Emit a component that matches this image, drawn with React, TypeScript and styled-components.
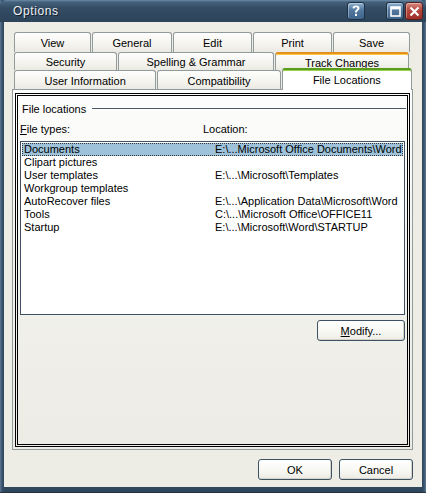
import styled, { createGlobalStyle } from 'styled-components';

const GlobalStyle = createGlobalStyle`
	html, body {
		margin: 0;
		padding: 0;
		background: #ffffff;
	}
	* {
		box-sizing: border-box;
	}
`;

const tabRows = [
	{
		height: 20,
		tabs: [
			{ label: 'View', width: 77 },
			{ label: 'General', width: 80 },
			{ label: 'Edit', width: 79 },
			{ label: 'Print', width: 79 },
			{ label: 'Save', width: 77 },
		],
	},
	{
		height: 18,
		tabs: [
			{ label: 'Security', width: 103 },
			{ label: 'Spelling & Grammar', width: 156 },
			{ label: 'Track Changes', width: 134, hot: true },
		],
	},
	{
		height: 19,
		tabs: [
			{ label: 'User Information', width: 143 },
			{ label: 'Compatibility', width: 124 },
			{ label: 'File Locations', width: 131, selected: true },
		],
	},
];

const locations = [
	{ name: 'Documents', path: 'E:\\...Microsoft Office Documents\\Word' },
	{ name: 'Clipart pictures', path: '' },
	{ name: 'User templates', path: 'E:\\...\\Microsoft\\Templates' },
	{ name: 'Workgroup templates', path: '' },
	{ name: 'AutoRecover files', path: 'E:\\...\\Application Data\\Microsoft\\Word' },
	{ name: 'Tools', path: 'C:\\...\\Microsoft Office\\OFFICE11' },
	{ name: 'Startup', path: 'E:\\...\\Microsoft\\Word\\STARTUP' },
];

export default function App() {
	return (
		<>
			<GlobalStyle />
			<Window>
				<TitleBar>
					<Title>Options</Title>
					<CaptionButton $kind='help' style={{ marginRight: 20 }}>
						<svg width='10' height='12' viewBox='0 0 10 12'>
							<path
								d='M1.5 3.2 C1.5 1.2 3 0.5 5 0.5 C7.2 0.5 8.5 1.6 8.5 3.2 C8.5 5 6 5.4 6 7.4 L4 7.4 C4 4.8 6.4 4.6 6.4 3.3 C6.4 2.5 5.8 2.2 5 2.2 C4.1 2.2 3.6 2.7 3.6 3.5 Z'
								fill='#fff'
							/>
							<rect x='4' y='8.8' width='2' height='2.2' fill='#fff' />
						</svg>
					</CaptionButton>
					<CaptionButton $kind='max'>
						<svg width='11' height='11' viewBox='0 0 11 11'>
							<rect x='1' y='1' width='9' height='9' fill='none' stroke='#fff' strokeWidth='1.6' />
							<rect x='1' y='1' width='9' height='2.4' fill='#fff' />
						</svg>
					</CaptionButton>
					<CaptionButton $kind='close'>
						<svg width='11' height='11' viewBox='0 0 11 11'>
							<path d='M1.5 1.5 L9.5 9.5 M9.5 1.5 L1.5 9.5' stroke='#fff' strokeWidth='2.2' />
						</svg>
					</CaptionButton>
				</TitleBar>

				<Body>
					<TabStrip>
						{tabRows.map((row, i) => (
							<TabRow key={i} $height={row.height}>
								{row.tabs.map((tab) => (
									<Tab
										key={tab.label}
										$width={tab.width}
										$hot={!!tab.hot}
										$selected={!!tab.selected}
									>
										{tab.label}
									</Tab>
								))}
							</TabRow>
						))}
					</TabStrip>

					<Panel>
						<Frame>
							<GroupHeader>
								<span>File locations</span>
								<GroupLine />
							</GroupHeader>

							<ColumnHeads>
								<span>
									<u>F</u>ile types:
								</span>
								<span>Location:</span>
							</ColumnHeads>

							<ListBox>
								{locations.map((loc, i) => (
									<ListRow key={loc.name} $selected={i === 0}>
										<span>{loc.name}</span>
										<span>{loc.path}</span>
									</ListRow>
								))}
							</ListBox>

							<ModifyRow>
								<Button $width={88}>
									<u>M</u>odify...
								</Button>
							</ModifyRow>
						</Frame>
					</Panel>

					<Footer>
						<Button $width={74}>OK</Button>
						<Button $width={74}>Cancel</Button>
					</Footer>
				</Body>
			</Window>
		</>
	);
}

const Window = styled.div`
	width: 426px;
	height: 493px;
	display: flex;
	flex-direction: column;
	padding: 0 4px 5px 4px;
	background: linear-gradient(90deg, #5d7a96 0px, #3a536c 2px, #2f465c 4px, #2f465c 422px, #3a536c 424px, #5d7a96 426px);
	border-bottom: 1px solid #22303e;
	font-family: 'Liberation Sans', Arial, sans-serif;
	font-size: 11px;
	color: #000;
`;

const TitleBar = styled.div`
	height: 22px;
	flex: none;
	display: flex;
	align-items: center;
	margin: 0 -4px;
	padding: 0 3px 0 13px;
	background: linear-gradient(180deg, #6b8aa6 0px, #45627d 2px, #344d65 8px, #2c4358 22px);
	border-radius: 6px 6px 0 0;
`;

const Title = styled.div`
	flex: 1;
	color: #eef2f6;
	font-family: 'Liberation Sans', Arial, sans-serif;
	font-size: 12px;
	letter-spacing: 0.6px;
	text-shadow: 1px 1px 0 #14202c;
`;

const CaptionButton = styled.div<{ $kind: 'help' | 'max' | 'close' }>`
	width: 18px;
	height: 18px;
	margin-left: 1px;
	display: flex;
	align-items: center;
	justify-content: center;
	border-radius: 3px;
	border: 1px solid ${(p) => (p.$kind === 'close' ? '#5a2020' : '#1c3046')};
	background: ${(p) =>
		p.$kind === 'close'
			? 'linear-gradient(180deg, #d88a80 0%, #b5473d 45%, #9e3029 100%)'
			: 'linear-gradient(180deg, #8fb0cf 0%, #52789e 45%, #3f6488 100%)'};
	box-shadow: inset 1px 1px 0 rgba(255, 255, 255, 0.35);
`;

const Body = styled.div`
	flex: 1;
	display: flex;
	flex-direction: column;
	padding: 10px 10px 0 8px;
	background: #edece5;
`;

const TabStrip = styled.div`
	display: flex;
	flex-direction: column;
	padding-left: 2px;
`;

const TabRow = styled.div<{ $height: number }>`
	height: ${(p) => p.$height}px;
	display: flex;
	gap: 1px;
	align-items: flex-end;
`;

const Tab = styled.div<{ $width: number; $hot: boolean; $selected: boolean }>`
	width: ${(p) => p.$width}px;
	height: ${(p) => (p.$selected ? 'calc(100% + 3px)' : '100%')};
	display: flex;
	align-items: center;
	justify-content: center;
	padding-top: ${(p) => (p.$selected ? '0' : '1px')};
	border: 1px solid #919b9c;
	border-bottom: none;
	border-radius: 3px 3px 0 0;
	background: ${(p) =>
		p.$selected ? '#ffffff' : 'linear-gradient(180deg, #fefefe 0%, #f4f3ee 60%, #eae9e2 100%)'};
	white-space: nowrap;
	${(p) =>
		p.$hot &&
		`
		border-top: 2px solid #e3901c;
		box-shadow: inset 0 1px 0 #ffc74a;
	`}
	${(p) =>
		p.$selected &&
		`
		position: relative;
		z-index: 1;
		margin-bottom: -1px;
		border-top: 2px solid #5a9c1c;
		box-shadow: inset 0 1px 0 #9ad44e;
	`}
`;

const Panel = styled.div`
	height: 361px;
	flex: none;
	margin-right: -1px;
	padding: 3px 2px 2px 2px;
	border: 1px solid #919b9c;
	background: linear-gradient(180deg, #fdfdfd 0%, #f3f3ee 45%, #ecebe4 100%);
`;

const Frame = styled.div`
	height: 100%;
	display: flex;
	flex-direction: column;
	padding: 6px 0 0 2px;
	border: 3px double #000;
`;

const GroupHeader = styled.div`
	display: flex;
	align-items: center;
	gap: 6px;
	height: 13px;
	padding-left: 2px;
	margin-right: 1px;
`;

const GroupLine = styled.div`
	flex: 1;
	height: 1px;
	background: #4a5866;
`;

const ColumnHeads = styled.div`
	display: grid;
	grid-template-columns: 183px 1fr;
	height: 13px;
	margin-top: 8px;
`;

const ListBox = styled.div`
	height: 174px;
	margin: 5px 2px 0 0;
	padding: 1px;
	background: #ffffff;
	border: 1px solid #3f5265;
`;

const ListRow = styled.div<{ $selected: boolean }>`
	display: grid;
	grid-template-columns: 191px 1fr;
	height: 13px;
	line-height: 12px;
	padding-left: 2px;
	white-space: nowrap;
	overflow: hidden;
	background: ${(p) => (p.$selected ? '#9dc2d9' : 'transparent')};
	outline: ${(p) => (p.$selected ? '1px dotted #333' : 'none')};
	outline-offset: -1px;
`;

const ModifyRow = styled.div`
	display: flex;
	justify-content: flex-end;
	margin: 5px 2px 0 0;
`;

const Button = styled.div<{ $width: number }>`
	width: ${(p) => p.$width}px;
	height: 21px;
	display: flex;
	align-items: center;
	justify-content: center;
	border: 1px solid #3e5163;
	border-radius: 3px;
	background: linear-gradient(180deg, #ffffff 0%, #f7f7f2 60%, #ecebe4 100%);
	box-shadow: inset -1px -1px 0 #d6d4ca;
`;

const Footer = styled.div`
	display: flex;
	justify-content: flex-end;
	gap: 7px;
	margin: 9px -1px 0 0;
`;
